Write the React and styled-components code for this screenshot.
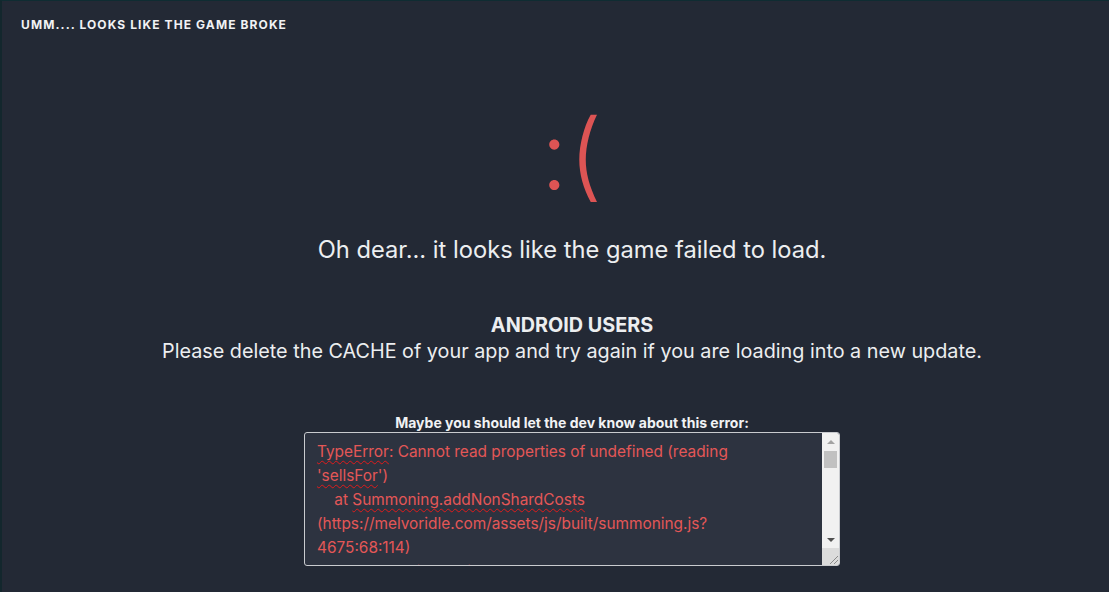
import styled, { createGlobalStyle } from "styled-components";

const GlobalStyle = createGlobalStyle`
  html, body {
    margin: 0;
    padding: 0;
    background: #232935;
  }
  body {
    font-family: "Inter", "Noto Sans", sans-serif;
    color: #e9eaec;
  }
`;

const Screen = styled.div`
  width: 1109px;
  height: 592px;
  box-sizing: border-box;
  background: #232935;
  border-top: 1px solid #0f2c32;
  border-left: 2px solid #13272d;
  overflow: hidden;
  display: flex;
  flex-direction: column;
`;

const Header = styled.header`
  padding: 16px 19px 0;
  font-size: 12px;
  line-height: 15px;
  font-weight: 700;
  letter-spacing: 1.1px;
  text-transform: uppercase;
  color: #f1f2f4;
`;

const Body = styled.main`
  display: flex;
  flex-direction: column;
  align-items: center;
  padding-left: 33px;
  text-align: center;
`;

const Face = styled.div`
  margin-top: 74px;
  font-size: 96px;
  font-weight: 350;
  line-height: 1;
  color: #dd5454;
  letter-spacing: 1px;
`;

const Title = styled.h1`
  margin: 34px 0 0;
  font-size: 23.7px;
  line-height: 27px;
  font-weight: 400;
  color: #eceef0;
`;

const Notice = styled.section`
  margin-top: 49px;
  font-size: 19.8px;
  line-height: 26px;
  color: #eceef0;
`;

const NoticeTitle = styled.div`
  font-weight: 700;
`;

const AskLabel = styled.div`
  margin-top: 50px;
  font-size: 14px;
  line-height: 17px;
  font-weight: 700;
  color: #f1f2f4;
`;

const ErrorBox = styled.div`
  margin-top: 1px;
  width: 536px;
  height: 134px;
  box-sizing: border-box;
  display: flex;
  background: #2d3340;
  border: 1px solid #c9cbcf;
  border-radius: 3px;
  overflow: hidden;
  text-align: left;
`;

const ErrorText = styled.div`
  flex: 1;
  padding: 7px 26px 7px 12px;
  color: #e45757;
  font-size: 15.4px;
  line-height: 24px;
  white-space: pre-wrap;
  overflow-wrap: break-word;
  overflow: hidden;
`;

const Misspelt = styled.span`
  text-decoration: underline wavy #e01b1b;
  text-decoration-thickness: 1px;
  text-underline-offset: 3px;
`;

const Scrollbar = styled.div`
  width: 17px;
  display: flex;
  flex-direction: column;
  align-items: center;
  background: #f1f1f1;
`;

const Arrow = styled.div`
  height: 17px;
  width: 100%;
  display: flex;
  align-items: center;
  justify-content: center;

  &::before {
    content: "";
    border-left: 4px solid transparent;
    border-right: 4px solid transparent;
    ${({ $down, $active }) =>
      $down
        ? `border-top: 4px solid ${$active ? "#505050" : "#a3a3a3"};`
        : `border-bottom: 4px solid ${$active ? "#505050" : "#a3a3a3"};`}
  }
`;

const Track = styled.div`
  flex: 1;
  width: 100%;
  padding: 1px 2px 0;
  box-sizing: border-box;
`;

const Thumb = styled.div`
  height: 17px;
  background: #c1c1c1;
`;

const Grip = styled.div`
  height: 17px;
  width: 100%;
  background: #dcdcdc;
  display: flex;
  align-items: flex-end;
  justify-content: flex-end;
`;

const stack = [
  "    at Summoning.registerData (https://melvoridle.com/assets/js/built/summoning.js?4675:41:18)",
  "    at Game.registerDataPackage (https://melvoridle.com/assets/js/built/game.js?4675:1290:31)",
  "    at Game.fetchAndRegisterDataPackage (https://melvoridle.com/assets/js/built/game.js?4675:1208:14)",
];

export default function App() {
  return (
    <>
      <GlobalStyle />
      <Screen>
        <Header>Umm.... Looks like the game broke</Header>
        <Body>
          <Face>:(</Face>
          <Title>Oh dear... it looks like the game failed to load.</Title>
          <Notice>
            <NoticeTitle>ANDROID USERS</NoticeTitle>
            <div>
              Please delete the CACHE of your app and try again if you are
              loading into a new update.
            </div>
          </Notice>
          <AskLabel>Maybe you should let the dev know about this error:</AskLabel>
          <ErrorBox>
            <ErrorText>
              <Misspelt>TypeError</Misspelt>: Cannot read properties of undefined (reading <Misspelt>'sellsFor</Misspelt>')
              {"\n    at "}
              <Misspelt>Summoning.addNonShardCosts</Misspelt>
              {" (https://melvoridle.com/assets/js/built/summoning.js?"}
              <wbr />
              {"4675:68:114)\n"}
              {stack.join("\n")}
            </ErrorText>
            <Scrollbar>
              <Arrow />
              <Track>
                <Thumb />
              </Track>
              <Arrow $down $active />
              <Grip>
                <svg width="12" height="12" viewBox="0 0 12 12">
                  <path d="M11 3 L3 11 M11 7 L7 11" stroke="#8a8a8a" strokeWidth="1" />
                </svg>
              </Grip>
            </Scrollbar>
          </ErrorBox>
        </Body>
      </Screen>
    </>
  );
}
